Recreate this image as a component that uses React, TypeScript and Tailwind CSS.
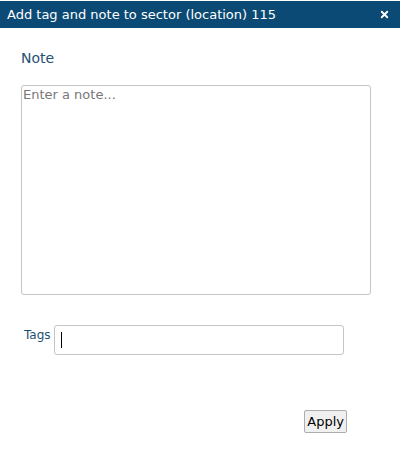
import { X } from 'lucide-react'

export default function App() {
  return (
    <div className="w-[400px] h-[450px] bg-white flex flex-col" style={{ fontFamily: '"DejaVu Sans", Verdana, sans-serif' }}>
      {/* Title bar */}
      <div className="mt-px h-[27px] bg-[#0b4a74] flex items-center justify-between pl-[7px] pr-[10px]">
        <span className="text-white text-[13px]">Add tag and note to sector (location) 115</span>
        <X size={11} strokeWidth={4} className="text-white" />
      </div>

      <div className="px-[21px] flex flex-col">
        <h2 className="mt-[20px] text-[14px] text-[#1f4f73]">Note</h2>
        <textarea
          placeholder="Enter a note..."
          className="mt-[16px] w-[350px] h-[210px] border border-[#c4c4c4] rounded-[3px] px-px py-0 text-[13px] leading-[18px] placeholder:text-[#777] resize-none outline-none"
        />

        <div className="mt-[30px] flex items-start gap-[3px] pl-[3px]">
          <label className="mt-[1px] text-[12px] text-[#1f4f73]">Tags</label>
          <div className="w-[290px] h-[30px] border border-[#c4c4c4] rounded-[3px] flex items-center pl-[6px]">
            <span className="w-px h-[16px] bg-black" />
          </div>
        </div>

        <div className="mt-[55px] flex justify-end mr-[32px]">
          <button className="h-[23px] px-[2px] border border-[#adadad] rounded-[2px] bg-[#f0f0f0] text-[13px] text-black">Apply</button>
        </div>
      </div>
    </div>
  )
}
